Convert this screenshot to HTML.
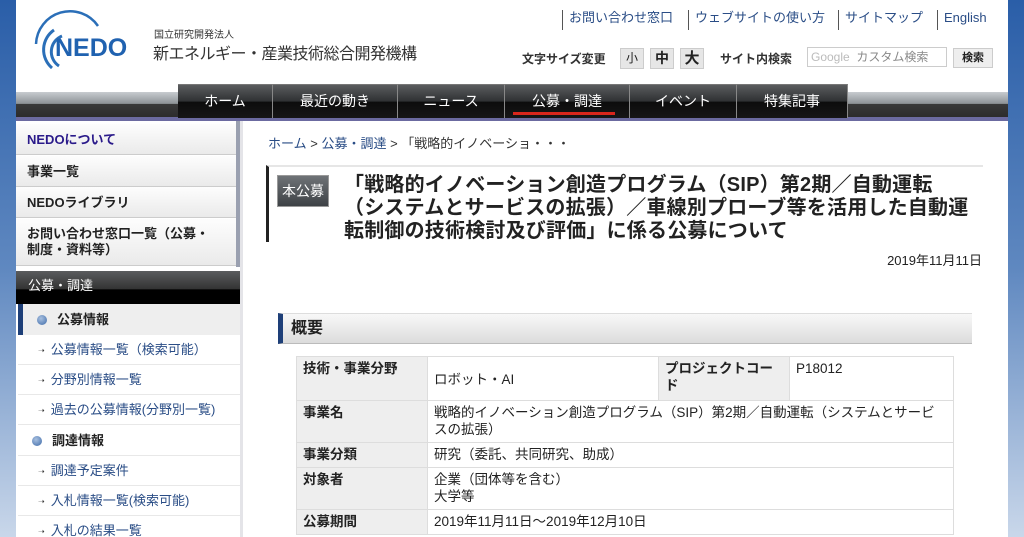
<!DOCTYPE html>
<html><head><meta charset="utf-8"><style>
*{margin:0;padding:0;box-sizing:border-box}
html,body{width:1024px;height:537px;overflow:hidden}
body{font-family:"Liberation Sans","Noto Sans CJK JP",sans-serif;background:linear-gradient(180deg,#2a5ea8 0%,#5f88c0 50%,#c9d7ea 100%);position:relative;color:#222}
.page{position:absolute;left:16px;top:0;width:992px;height:537px;background:#fff;overflow:hidden}
.abs{position:absolute}
.toplinks a{position:absolute;top:10px;font-size:13px;color:#2a4d86;text-decoration:none;border-left:1px solid #555;padding-left:6px;height:20px;line-height:16px}
.nav{position:absolute;left:0;top:92px;width:992px;height:26px;background:linear-gradient(#c8ccd0,#8d9296 45%,#3a3a3a 46%,#2a2a2a)}
.navline{position:absolute;left:0;top:117px;width:992px;height:4px;background:#6b6aa0}
.tab{position:absolute;top:84px;height:34px;background:linear-gradient(#5a5c5e,#2e3032 50%,#0c0c0c 51%,#161616);color:#fff;font-size:14px;text-align:center;line-height:32px;border-right:1px solid #888;border-top:1px solid #777}
.side{position:absolute;left:0;top:121px;width:224px;height:416px;background:#fff}
.sb{position:absolute;left:0;width:220px;background:linear-gradient(#fdfdfd,#eaeaea);font-weight:bold;font-size:13px;color:#222;padding-left:11px;border-bottom:1px solid #ccc}
.sub{position:absolute;left:2px;width:222px;height:30px;border-bottom:1px solid #e8e8e8;font-size:13px;color:#2a4d86;padding-left:20px;line-height:30px}
.sub:before{content:"➝";font-size:8px;color:#333;margin-right:6px;vertical-align:1px}
.dot{display:inline-block;width:10px;height:10px;border-radius:50%;background:radial-gradient(circle at 40% 35%,#a8c0e0,#3d6aa8);margin-right:10px;vertical-align:-1px}
table{border-collapse:collapse}
td{border:1px solid #ddd;padding:3px 6px 4px;vertical-align:top;line-height:17px}
td.h{background:#eee;font-weight:bold;width:131px}
</style></head><body>
<div class="page">
<svg class="abs" style="left:16px;top:8px" width="130" height="64" viewBox="0 0 130 64">
<path d="M4 36 A34 34 0 0 1 66 18" fill="none" stroke="#2b6fb8" stroke-width="2.5"/>
<path d="M20 60 A24 24 0 0 1 22 22" fill="none" stroke="#2b6fb8" stroke-width="3"/>
<path d="M27 58 A17 17 0 0 1 30 28" fill="none" stroke="#2b6fb8" stroke-width="3"/>
<text x="23" y="48" font-family="Liberation Sans" font-weight="bold" font-size="25" fill="#2062b0">NEDO</text>
</svg>
<div class="abs" style="left:138px;top:26px;font-size:10px;color:#333">国立研究開発法人</div>
<div class="abs" style="left:137px;top:40px;font-size:16px;color:#333;letter-spacing:-0.5px">新エネルギー・産業技術総合開発機構</div>
<div class="toplinks">
<a style="left:546px">お問い合わせ窓口</a><a style="left:672px">ウェブサイトの使い方</a><a style="left:822px">サイトマップ</a><a style="left:921px">English</a>
</div>
<div class="abs" style="left:506px;top:50px;font-size:12px;font-weight:bold;color:#333">文字サイズ変更</div>
<div class="abs" style="left:604px;top:48px;width:24px;height:21px;background:#e6e6e6;border:1px solid #ccc;font-size:12px;text-align:center;line-height:19px">小</div>
<div class="abs" style="left:634px;top:48px;width:24px;height:21px;background:#e6e6e6;border:1px solid #ccc;font-size:14px;font-weight:bold;text-align:center;line-height:19px">中</div>
<div class="abs" style="left:664px;top:48px;width:24px;height:21px;background:#e6e6e6;border:1px solid #ccc;font-size:15px;font-weight:bold;text-align:center;line-height:19px">大</div>
<div class="abs" style="left:704px;top:50px;font-size:12px;font-weight:bold;color:#333">サイト内検索</div>
<div class="abs" style="left:791px;top:47px;width:140px;height:20px;border:1px solid #ccc;font-size:12px;color:#888;padding-left:3px;line-height:18px"><span style="color:#bbb">Google</span>&nbsp; カスタム検索</div>
<div class="abs" style="left:937px;top:48px;width:40px;height:20px;background:#eee;border:1px solid #ccc;font-size:11px;font-weight:bold;text-align:center;line-height:18px">検索</div>
<div class="nav"></div><div class="navline"></div>
<div class="tab" style="left:162px;width:95px">ホーム</div>
<div class="tab" style="left:257px;width:125px">最近の動き</div>
<div class="tab" style="left:382px;width:107px">ニュース</div>
<div class="tab" style="left:489px;width:125px">公募・調達<div class="abs" style="left:8px;top:27px;width:102px;height:3px;background:#d8261c"></div></div>
<div class="tab" style="left:614px;width:107px">イベント</div>
<div class="tab" style="left:721px;width:111px">特集記事</div>
<div class="side">
<div style="position:absolute;left:220px;top:0;width:4px;height:146px;background:#9aa0b0"></div>
<div class="sb" style="top:3px;height:31px;line-height:31px;color:#2a1a8a">NEDOについて</div>
<div class="sb" style="top:35px;height:31px;line-height:31px">事業一覧</div>
<div class="sb" style="top:66px;height:31px;line-height:31px">NEDOライブラリ</div>
<div class="sb" style="top:98px;height:47px;padding-top:7px;line-height:16px">お問い合わせ窓口一覧（公募・<br>制度・資料等）</div>
<div class="abs" style="left:0;top:150px;width:224px;height:33px;background:linear-gradient(#5a5c5e,#333 55%,#000 56%,#000);color:#fff;font-size:13px;padding-left:12px;line-height:30px">公募・調達</div>
<div class="abs" style="left:2px;top:183px;width:222px;height:31px;background:#eee;border-left:5px solid #1e3f78;font-size:13px;font-weight:bold;padding-left:14px;line-height:31px"><span class="dot"></span>公募情報</div>
<div class="sub" style="top:214px">公募情報一覧（検索可能）</div>
<div class="sub" style="top:244px">分野別情報一覧</div>
<div class="sub" style="top:274px">過去の公募情報(分野別一覧)</div>
<div class="abs" style="left:2px;top:304px;width:222px;height:31px;border-bottom:1px solid #e8e8e8;font-size:13px;font-weight:bold;padding-left:14px;line-height:31px"><span class="dot"></span>調達情報</div>
<div class="sub" style="top:335px">調達予定案件</div>
<div class="sub" style="top:365px">入札情報一覧(検索可能)</div>
<div class="sub" style="top:395px">入札の結果一覧</div>
</div>
<div class="abs" style="left:224px;top:121px;width:3px;height:416px;background:#e4e4e8"></div>
<div class="abs" style="left:252px;top:133px;font-size:13px;color:#333"><span style="color:#2a4d86">ホーム</span> &gt; <span style="color:#2a4d86">公募・調達</span> &gt; 「戦略的イノベーショ・・・</div>
<div class="abs" style="left:250px;top:165px;width:717px;height:77px;border-left:3px solid #222;border-top:2px solid #e6e6e6"></div>
<div class="abs" style="left:261px;top:175px;width:52px;height:32px;background:linear-gradient(#6e7276,#3e4246);border:1px solid #999;color:#fff;font-size:14px;text-align:center;line-height:30px">本公募</div>
<div class="abs" style="left:328px;top:174px;width:660px;font-size:20px;font-weight:bold;line-height:23px;color:#222;white-space:nowrap;letter-spacing:0.2px">「戦略的イノベーション創造プログラム（SIP）第2期／自動運転<br>（システムとサービスの拡張）／車線別プローブ等を活用した自動運<br>転制御の技術検討及び評価」に係る公募について</div>
<div class="abs" style="left:850px;top:250px;width:116px;text-align:right;font-size:13px">2019年11月11日</div>
<div class="abs" style="left:262px;top:313px;width:694px;height:31px;border-left:5px solid #1e3f78;background:linear-gradient(#f8f8f8,#dcdcdc);border-top:1px solid #ddd;border-bottom:1px solid #bbb;font-size:16px;font-weight:bold;padding-left:8px;line-height:30px">概要</div>
<table class="abs" style="left:280px;top:356px;width:658px;font-size:13.5px">
<tr style="height:44px"><td class="h">技術・事業分野</td><td style="width:231px;padding-top:14px">ロボット・AI</td><td class="h" style="width:131px">プロジェクトコード</td><td>P18012</td></tr>
<tr><td class="h">事業名</td><td colspan="3">戦略的イノベーション創造プログラム（SIP）第2期／自動運転（システムとサービスの拡張）</td></tr>
<tr><td class="h">事業分類</td><td colspan="3">研究（委託、共同研究、助成）</td></tr>
<tr><td class="h">対象者</td><td colspan="3">企業（団体等を含む）<br>大学等</td></tr>
<tr><td class="h">公募期間</td><td colspan="3">2019年11月11日～2019年12月10日</td></tr>
</table>
</div>
</body></html>
